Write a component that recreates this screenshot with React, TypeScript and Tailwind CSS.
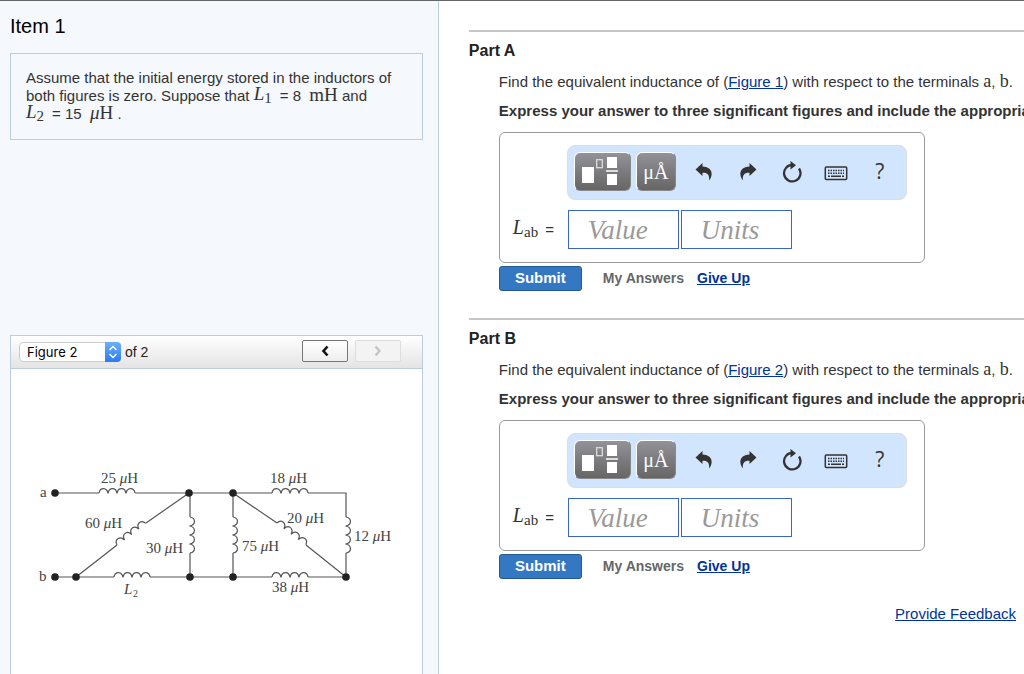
import { useState } from "react";

const SANS = "font-['Liberation_Sans',Arial,sans-serif]";
const SERIF = "font-['Liberation_Serif','Times_New_Roman',serif]";

// four half-loops of a coil along the x axis, 36 units long
function Coil({ x, y, angle = 0 }: { x: number; y: number; angle?: number }) {
  return (
    <path
      d="M0 0C1 -6 8 -6 9 0.500C10 -6 17 -6 18 0.500C19 -6 26 -6 27 0.500C28 -6 35 -6 36 0"
      transform={`translate(${x} ${y}) rotate(${angle})`}
    />
  );
}

const nodes = [
  [55, 493],
  [55, 577],
  [76, 577],
  [189, 493],
  [190, 577],
  [233, 493],
  [233, 577],
  [346, 577],
];

const values = [
  { x: 101, y: 483, henries: 25 },
  { x: 85, y: 528, henries: 60 },
  { x: 146, y: 553, henries: 30 },
  { x: 270, y: 483, henries: 18 },
  { x: 287, y: 523, henries: 20 },
  { x: 242, y: 551, henries: 75 },
  { x: 354, y: 541, henries: 12 },
  { x: 272, y: 592, henries: 38 },
];

function Circuit() {
  return (
    <svg viewBox="30 460 370 145" className="h-[145px] w-[370px]" role="img" aria-label="Inductor circuit">
      <g fill="none" stroke="#555" strokeWidth="1.2">
        <path d="M55 493H99M135 493H272M308 493H346V517M346 553V577H308M272 577H150M114 577H55" />
        <path d="M189 493L146 523M117 545L76 577" />
        <path d="M190 493V517M190 553V577M233 493V517M233 553V577" />
        <path d="M233 493L277 523M306 545L346 577" />
        <Coil x={99} y={493} />
        <Coil x={272} y={493} />
        <Coil x={114} y={577} />
        <Coil x={272} y={577} />
        <Coil x={190} y={517} angle={90} />
        <Coil x={233} y={517} angle={90} />
        <Coil x={346} y={517} angle={90} />
        <Coil x={117} y={545} angle={-37} />
        <Coil x={277} y={523} angle={37} />
      </g>
      <g fill="#222">
        {nodes.map(([x, y]) => (
          <circle key={`${x}-${y}`} cx={x} cy={y} r="3.8" />
        ))}
      </g>
      <g fill="#444" className={`${SERIF} text-[15px]`}>
        {values.map((v) => (
          <text key={v.henries} x={v.x} y={v.y}>
            {v.henries} <tspan fontStyle="italic">μ</tspan>H
          </text>
        ))}
        <text x="40" y="497">
          a
        </text>
        <text x="39" y="581">
          b
        </text>
        <text x="124" y="594" fontStyle="italic">
          L
        </text>
        <text x="133" y="597" className="text-[10px]">
          2
        </text>
      </g>
    </svg>
  );
}

function UndoArrow({ mirrored = false }: { mirrored?: boolean }) {
  return (
    <svg viewBox="0 0 18 18" className={mirrored ? "size-[18px] -scale-x-100" : "size-[18px]"} fill="#333">
      <path d="M0.500 6.500L7.500 0V3.500C13.500 3.500 17.500 7 16.500 12.500Q16 15.500 14 17.500C14.800 12 12.500 9.500 7.500 9.800V13Z" />
    </svg>
  );
}

function ResetIcon() {
  return (
    <svg viewBox="0 0 20 22" className="h-[22px] w-5" fill="none">
      <path d="M10.500 4A8.200 8.200 0 1 0 17 7.500" stroke="#333" strokeWidth="2.300" />
      <path d="M8.500 0L14 4.200L8.500 8.400Z" fill="#333" />
    </svg>
  );
}

function KeyboardIcon() {
  return (
    <svg viewBox="0 0 24 18" className="h-[18px] w-6" fill="none" stroke="#333">
      <rect x="1.300" y="4" width="21.400" height="12.400" rx="1" strokeWidth="1.500" />
      <path d="M4 7.500H20M4 10.300H20" strokeWidth="1.600" strokeDasharray="1.500 1" />
      <path d="M4 13.300H6M7 13.300H17M18 13.300H20" strokeWidth="1.600" />
    </svg>
  );
}

function TemplatesIcon() {
  return (
    <svg viewBox="0 0 55 37" className="h-[37px] w-[55px]">
      <rect x="7" y="14" width="12" height="16" fill="#fff" />
      <rect x="21.700" y="6.700" width="5.600" height="8" fill="none" stroke="#ddd" strokeWidth="1.300" />
      <rect x="32" y="4" width="10" height="11" fill="#fff" />
      <rect x="31" y="17" width="12" height="2" fill="#ddd" />
      <rect x="32" y="21" width="10" height="11" fill="#fff" />
    </svg>
  );
}

const darkKey =
  "flex h-[39px] items-center justify-center rounded-md border border-t-white border-l-white border-r-[#888] border-b-[#888] bg-linear-to-b from-[#939298] to-[#666]";
const iconKey = "flex h-10 w-11 items-center justify-center";

function Toolbar() {
  return (
    <div className="flex h-[55px] items-center rounded-lg border border-[#ddd] bg-[#d1e5fe] pb-0.5 pl-1.5">
      <button aria-label="Templates" className={`${darkKey} mr-[5px] w-[57px]`}>
        <TemplatesIcon />
      </button>
      <button aria-label="Symbols" className={`${darkKey} ${SERIF} mr-[6px] w-10 text-[20px] text-white`}>
        μÅ
      </button>
      <button aria-label="Undo" className={iconKey}>
        <UndoArrow />
      </button>
      <button aria-label="Redo" className={iconKey}>
        <UndoArrow mirrored />
      </button>
      <button aria-label="Reset" className={iconKey}>
        <ResetIcon />
      </button>
      <button aria-label="Keyboard shortcuts" className={iconKey}>
        <KeyboardIcon />
      </button>
      <button aria-label="Help" className={`${iconKey} font-['Open_Sans',sans-serif] text-[21px] text-[#333]`}>
        ?
      </button>
    </div>
  );
}

const answerField = `${SERIF} h-[39px] w-[111px] border border-[#3a66cc] bg-white pt-0.5 pl-[19px] text-[27px] italic text-[#333] outline-none placeholder:text-[#999]`;

function Part({ name, figure }: { name: string; figure: number }) {
  const id = `part-${name.toLowerCase()}`;
  return (
    <section className="border-t-2 border-[#c6c6c6] pt-2 pb-[27px]">
      <h2 className="text-[16px] leading-[22px] font-bold text-[#222]">Part {name}</h2>
      <div className="ml-[30px]">
        <p className="mt-2.5 text-[15px] leading-5 whitespace-nowrap text-[#333]">
          Find the equivalent inductance of (
          <a href={`#figure-${figure}`} className="text-[#039] underline">
            Figure {figure}
          </a>
          ) with respect to the terminals <span className={`${SERIF} text-[18px] leading-0`}>a</span>,{" "}
          <span className={`${SERIF} text-[18px] leading-0`}>b</span>.
        </p>
        <p className="mt-[9px] text-[15px] leading-5 font-bold whitespace-nowrap text-[#333]">
          Express your answer to three significant figures and include the appropriate units.
        </p>
        <div className="mt-[11px] grid w-[426px] grid-cols-[55px_1fr] gap-y-2.5 rounded-md border border-[#999] pt-3 pr-[17px] pb-[13px] pl-3">
          <div className="col-start-2">
            <Toolbar />
          </div>
          <label htmlFor={`${id}-value`} className="flex items-center pl-px text-[15px] leading-5 text-[#333]">
            <span>
              <span className={`${SERIF} align-[1px] text-[20px] leading-0 italic`}>L</span>
              <span className={`${SERIF} mr-[7px] align-[-2px] text-[15px] leading-0`}>ab</span>=
            </span>
          </label>
          <div className="flex gap-0.5 pl-px">
            <input id={`${id}-value`} placeholder="Value" className={answerField} />
            <input aria-label="Units" placeholder="Units" className={answerField} />
          </div>
        </div>
        <div className="mt-[3px] flex items-center text-[14px] font-bold">
          <button className="h-[25px] w-[83px] rounded-[3px] border border-[#235a96] bg-[#3478c4] pb-px text-[15px] leading-5 text-white">
            Submit
          </button>
          <span className="ml-[21px] text-[#666]">My Answers</span>
          <a href="#give-up" className="ml-[13px] text-[#039] underline">
            Give Up
          </a>
        </div>
      </div>
    </section>
  );
}

function FigurePanel() {
  const [figure, setFigure] = useState("2");

  return (
    <section className="mt-[195px] flex-1 border border-b-0 border-[#bccde0] bg-white">
      <header className="flex h-[33px] items-center border-b border-[#bccde0] bg-linear-to-b from-white to-[#e4e4e4] pr-[21px] pl-2 text-[14px] text-[#222]">
        <div className="relative">
          <select
            aria-label="Figure"
            value={figure}
            onChange={(e) => setFigure(e.target.value)}
            className="block h-5 w-[102px] appearance-none rounded border border-[#ccc] bg-white pl-[7px] font-['Inter',sans-serif] text-[13px] leading-[18px] text-black"
          >
            <option value="1">Figure 1</option>
            <option value="2">Figure 2</option>
          </select>
          <svg
            viewBox="0 0 16 20"
            className="pointer-events-none absolute top-0 right-0 h-5 w-4 rounded-r bg-linear-to-b from-[#6cb0fa] to-[#2a78f6]"
            fill="none"
            stroke="#fff"
            strokeWidth="1.5"
          >
            <path d="M4.500 8L8 4.500L11.500 8M4.500 12L8 15.500L11.500 12" />
          </svg>
        </div>
        <span className="ml-1">of 2</span>
        <button
          aria-label="Previous figure"
          onClick={() => setFigure("1")}
          className="mr-[7px] mb-[3px] ml-auto flex h-[22px] w-[46px] items-center justify-center rounded-xs border border-[#777] bg-linear-to-b from-white to-[#eee]"
        >
          <svg viewBox="0 0 8 12" className="h-3 w-2" fill="none" stroke="#111" strokeWidth="2.6">
            <path d="M6.500 1.500L2.500 6L6.500 10.500" />
          </svg>
        </button>
        <button
          aria-label="Next figure"
          disabled
          className="mb-[3px] flex h-[22px] w-[46px] items-center justify-center rounded-xs border border-[#ddd] bg-[#f3f3f3]"
        >
          <svg viewBox="0 0 8 12" className="h-3 w-2" fill="none" stroke="#c4c4c4" strokeWidth="2.4">
            <path d="M1.500 1.500L5.500 6L1.500 10.500" />
          </svg>
        </button>
      </header>
      <div className="pt-[91px] pl-[19px]">
        <Circuit />
      </div>
    </section>
  );
}

export default function App() {
  return (
    <div className={`${SANS} grid min-h-screen grid-cols-[3fr_4fr] overflow-hidden border-t border-[#666] bg-white`}>
      <aside className="flex min-w-0 flex-col border-r border-[#bccde0] bg-[#f5f8fd] pr-[15px] pl-2.5">
        <h1 className="mt-[13px] text-[20px] leading-6 text-black">Item 1</h1>
        <p className="mt-[15px] border border-[#bccde0] p-[15px] pb-4 text-[15px] leading-[18px] text-[#333]">
          Assume that the initial energy stored in the inductors of both figures is zero. Suppose that{" "}
          <span className={`${SERIF} align-[1px] text-[19px] leading-0 italic`}>L</span>
          <span className={`${SERIF} mr-2 align-[-2px] text-[15px] leading-0`}>1</span>= 8&nbsp;&nbsp;
          <span className={`${SERIF} text-[19px] leading-0`}>mH</span> and{" "}
          <span className="whitespace-nowrap">
            <span className={`${SERIF} align-[1px] text-[19px] leading-0 italic`}>L</span>
            <span className={`${SERIF} mr-2 align-[-2px] text-[15px] leading-0`}>2</span>= 15&nbsp;&nbsp;
            <span className={`${SERIF} text-[19px] leading-0`}>
              <i>μ</i>H
            </span>{" "}
            .
          </span>
        </p>
        <FigurePanel />
      </aside>

      <main className="min-w-0 overflow-hidden pt-[29px] pl-[30px]">
        <Part name="A" figure={1} />
        <Part name="B" figure={2} />
        <footer className="pr-2 text-right text-[15px] leading-4">
          <a href="#feedback" className="text-[#039] underline">
            Provide Feedback
          </a>
        </footer>
      </main>
    </div>
  );
}
